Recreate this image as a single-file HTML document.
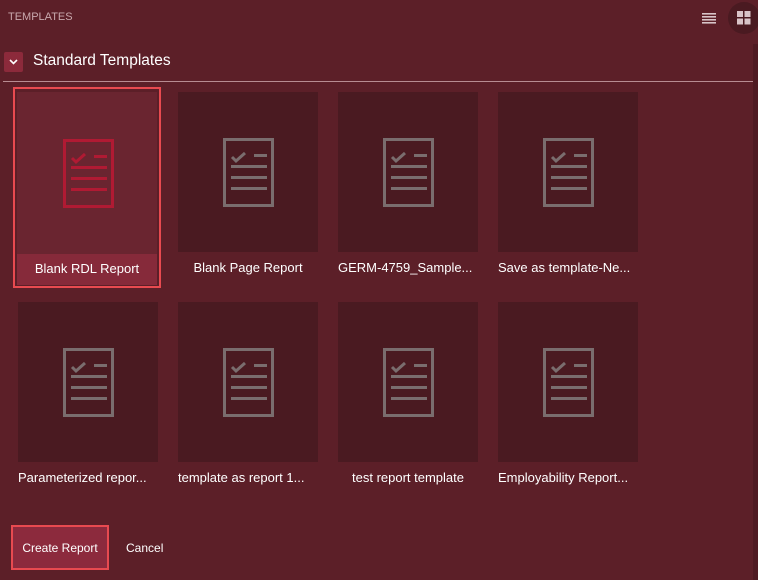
<!DOCTYPE html>
<html><head><style>
*{margin:0;padding:0;box-sizing:border-box}
body{width:758px;height:580px;background:#5c1f28;font-family:"Segoe UI","Liberation Sans",sans-serif;color:#fff;position:relative;overflow:hidden}
.title{position:absolute;left:8px;top:11px;font-size:11px;color:#c9a9ae;letter-spacing:0}
.hdr{position:absolute;left:4px;top:52px;width:19px;height:20px;background:#8c2a3b;border-radius:2px}
.hdr svg{position:absolute;left:5px;top:7px}
.sect{position:absolute;left:33px;top:52px;font-size:15.5px;color:#fff}
.line{position:absolute;left:3px;top:81px;width:755px;height:1px;background:#b88c92}
.scroll{position:absolute;left:753px;top:44px;width:5px;height:536px;background:#4f1a22}
.tile{position:absolute;width:140px;height:190px}
.img{position:absolute;left:0;top:0;width:140px;height:160px;background:#4a1a21}
.img svg{position:absolute;left:45px;top:46px}
.lbl{position:absolute;left:0;top:161px;width:140px;height:30px;line-height:30px;font-size:13px;text-align:center;white-space:nowrap;overflow:hidden;text-overflow:ellipsis}
.l{text-align:left}
.sel{position:absolute;left:13px;top:87px;width:148px;height:201px;border:2px solid #e84a50}
.sel .img{left:2px;top:3px;width:140px;height:162px;background:#6a2530}
.sel .img svg{top:47px;left:46px}
.sel .lbl{left:2px;top:165px;width:140px;height:31px;background:#862a3a}
.btn{position:absolute;left:11px;top:525px;width:98px;height:45px;border:2px solid #e84a50;background:#8c2a3d;font-size:12px;text-align:center;line-height:43px}
.cancel{position:absolute;left:126px;top:541px;font-size:12px}
</style></head><body>
<div class="title">TEMPLATES</div>
<svg style="position:absolute;left:702px;top:12px" width="14" height="12"><g fill="#d8c4c8"><rect y="1" width="14" height="1.6"/><rect y="4" width="14" height="1.6"/><rect y="7" width="14" height="1.6"/><rect y="10" width="14" height="1.6"/></g></svg>
<div style="position:absolute;left:728px;top:2px;width:32px;height:32px;border-radius:50%;background:#4a1a21"></div>
<svg style="position:absolute;left:737px;top:11px" width="14" height="14"><g fill="#d8c4c8"><rect width="6" height="6"/><rect x="7.5" width="6" height="6"/><rect y="7.5" width="6" height="6"/><rect x="7.5" y="7.5" width="6" height="6"/></g></svg>
<div class="hdr"><svg width="9" height="6"><path d="M1 1 L4.5 4.5 L8 1" stroke="#fff" stroke-width="1.6" fill="none"/></svg></div>
<div class="sect">Standard Templates</div>
<div class="line"></div>
<div class="scroll"></div>

<div class="sel"><div class="img"><svg width="52" height="70" viewBox="0 0 52 70"><g stroke="#b01a33" stroke-width="3" fill="none"><rect x="1.5" y="1.5" width="48" height="66"/><path d="M9 19 L13 23 L22 15"/><path d="M31 17.5 H44 M8 28.5 H44 M8 39.5 H44 M8 50.5 H44"/></g></svg></div><div class="lbl">Blank RDL Report</div></div>

<div class="tile" style="left:178px;top:92px"><div class="img"><svg width="52" height="70" viewBox="0 0 52 70"><g stroke="#7a6d6e" stroke-width="3" fill="none"><rect x="1.5" y="1.5" width="48" height="66"/><path d="M9 19 L13 23 L22 15"/><path d="M31 17.5 H44 M8 28.5 H44 M8 39.5 H44 M8 50.5 H44"/></g></svg></div><div class="lbl">Blank Page Report</div></div>
<div class="tile" style="left:338px;top:92px"><div class="img"><svg width="52" height="70" viewBox="0 0 52 70"><g stroke="#7a6d6e" stroke-width="3" fill="none"><rect x="1.5" y="1.5" width="48" height="66"/><path d="M9 19 L13 23 L22 15"/><path d="M31 17.5 H44 M8 28.5 H44 M8 39.5 H44 M8 50.5 H44"/></g></svg></div><div class="lbl l">GERM-4759_Sample...</div></div>
<div class="tile" style="left:498px;top:92px"><div class="img"><svg width="52" height="70" viewBox="0 0 52 70"><g stroke="#7a6d6e" stroke-width="3" fill="none"><rect x="1.5" y="1.5" width="48" height="66"/><path d="M9 19 L13 23 L22 15"/><path d="M31 17.5 H44 M8 28.5 H44 M8 39.5 H44 M8 50.5 H44"/></g></svg></div><div class="lbl l">Save as template-Ne...</div></div>

<div class="tile" style="left:18px;top:302px"><div class="img"><svg width="52" height="70" viewBox="0 0 52 70"><g stroke="#7a6d6e" stroke-width="3" fill="none"><rect x="1.5" y="1.5" width="48" height="66"/><path d="M9 19 L13 23 L22 15"/><path d="M31 17.5 H44 M8 28.5 H44 M8 39.5 H44 M8 50.5 H44"/></g></svg></div><div class="lbl l">Parameterized repor...</div></div>
<div class="tile" style="left:178px;top:302px"><div class="img"><svg width="52" height="70" viewBox="0 0 52 70"><g stroke="#7a6d6e" stroke-width="3" fill="none"><rect x="1.5" y="1.5" width="48" height="66"/><path d="M9 19 L13 23 L22 15"/><path d="M31 17.5 H44 M8 28.5 H44 M8 39.5 H44 M8 50.5 H44"/></g></svg></div><div class="lbl l">template as report 1...</div></div>
<div class="tile" style="left:338px;top:302px"><div class="img"><svg width="52" height="70" viewBox="0 0 52 70"><g stroke="#7a6d6e" stroke-width="3" fill="none"><rect x="1.5" y="1.5" width="48" height="66"/><path d="M9 19 L13 23 L22 15"/><path d="M31 17.5 H44 M8 28.5 H44 M8 39.5 H44 M8 50.5 H44"/></g></svg></div><div class="lbl">test report template</div></div>
<div class="tile" style="left:498px;top:302px"><div class="img"><svg width="52" height="70" viewBox="0 0 52 70"><g stroke="#7a6d6e" stroke-width="3" fill="none"><rect x="1.5" y="1.5" width="48" height="66"/><path d="M9 19 L13 23 L22 15"/><path d="M31 17.5 H44 M8 28.5 H44 M8 39.5 H44 M8 50.5 H44"/></g></svg></div><div class="lbl l">Employability Report...</div></div>

<div class="btn">Create Report</div>
<div class="cancel">Cancel</div>
</body></html>
